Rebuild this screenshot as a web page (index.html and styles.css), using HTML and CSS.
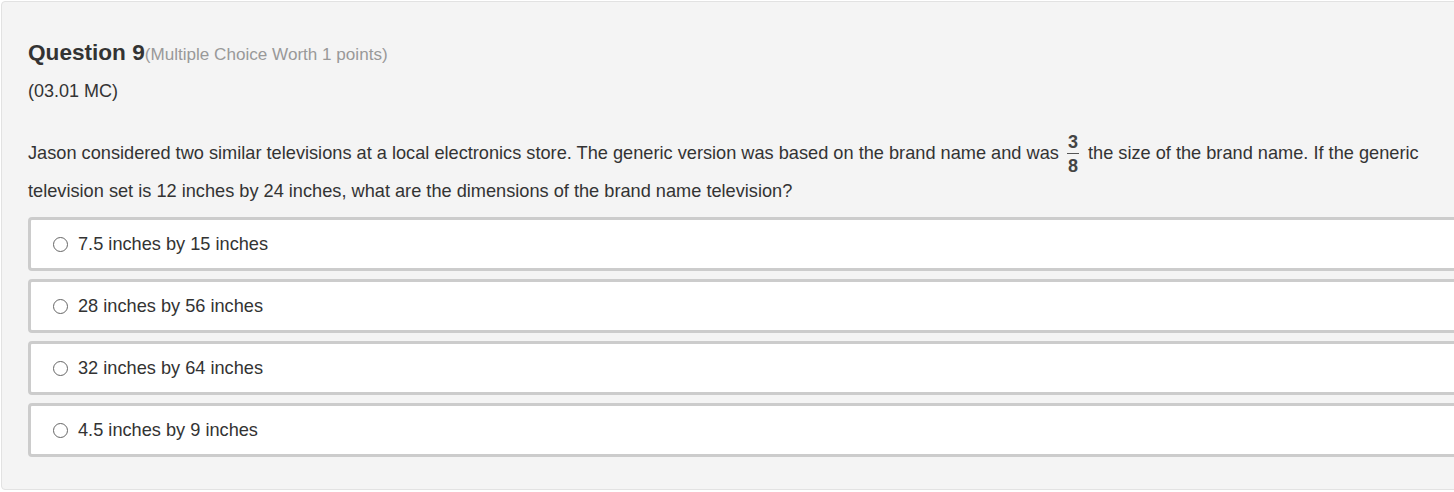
FILE: index.html
```html
<!DOCTYPE html>
<html>
<head>
<meta charset="utf-8">
<link rel="stylesheet" href="styles.css">
</head>
<body>
<div class="card">
  <h2 class="title">Question 9<span class="worth">(Multiple Choice Worth 1 points)</span></h2>
  <p class="code">(03.01 MC)</p>
  <p class="stem">Jason considered two similar televisions at a local electronics store. The generic version was based on the brand name and was <span class="frac"><span class="num">3</span><span class="den">8</span></span> the size of the brand name. If the generic television set is 12 inches by 24 inches, what are the dimensions of the brand name television?</p>
  <div class="options">
    <label class="option"><span class="radio"></span><span class="opt-text">7.5 inches by 15 inches</span></label>
    <label class="option"><span class="radio"></span><span class="opt-text">28 inches by 56 inches</span></label>
    <label class="option"><span class="radio"></span><span class="opt-text">32 inches by 64 inches</span></label>
    <label class="option"><span class="radio"></span><span class="opt-text">4.5 inches by 9 inches</span></label>
  </div>
</div>
</body>
</html>
```
FILE: styles.css
```css
html, body {
  margin: 0;
  padding: 0;
  background: #ffffff;
  overflow: hidden;
}
body {
  font-family: "Liberation Sans", Arial, sans-serif;
  color: #333333;
}
.card {
  margin: 1px 0 0 1px;
  width: 1500px;
  border: 1px solid #e2e2e2;
  border-radius: 4px;
  background: #f4f4f4;
  padding: 36px 0 32px 26px;
}
.title {
  margin: 0;
  font-size: 22.6px;
  line-height: 30px;
  font-weight: bold;
  color: #333333;
}
.worth {
  font-size: 17.1px;
  font-weight: normal;
  color: #999999;
}
.code {
  margin: 8px 0 0 0;
  font-size: 18px;
  line-height: 26px;
}
.stem {
  margin: 30px 0 0 0;
  font-size: 18.2px;
  line-height: 34px;
  width: 1410px;
}
.frac {
  display: inline-flex;
  flex-direction: column;
  align-items: center;
  vertical-align: middle;
  font-size: 18px;
  font-weight: bold;
  line-height: 16px;
  margin: 0 4px 0 3px;
  color: #444;
}
.num {
  border-bottom: 1px solid #555;
  padding: 0 1px 3px;
}
.den {
  padding-top: 4px;
}
.options {
  display: flex;
  flex-direction: column;
  gap: 8px;
  margin-top: 9px;
}
.option {
  display: flex;
  align-items: center;
  height: 48px;
  border: 3px solid #cccccc;
  border-radius: 4px;
  background: #ffffff;
  padding-left: 22px;
  font-size: 18.2px;
}
.radio {
  width: 15px;
  height: 15px;
  border: 1px solid #666;
  border-radius: 50%;
  box-sizing: border-box;
  margin-right: 10px;
  background: #fff;
}
```
